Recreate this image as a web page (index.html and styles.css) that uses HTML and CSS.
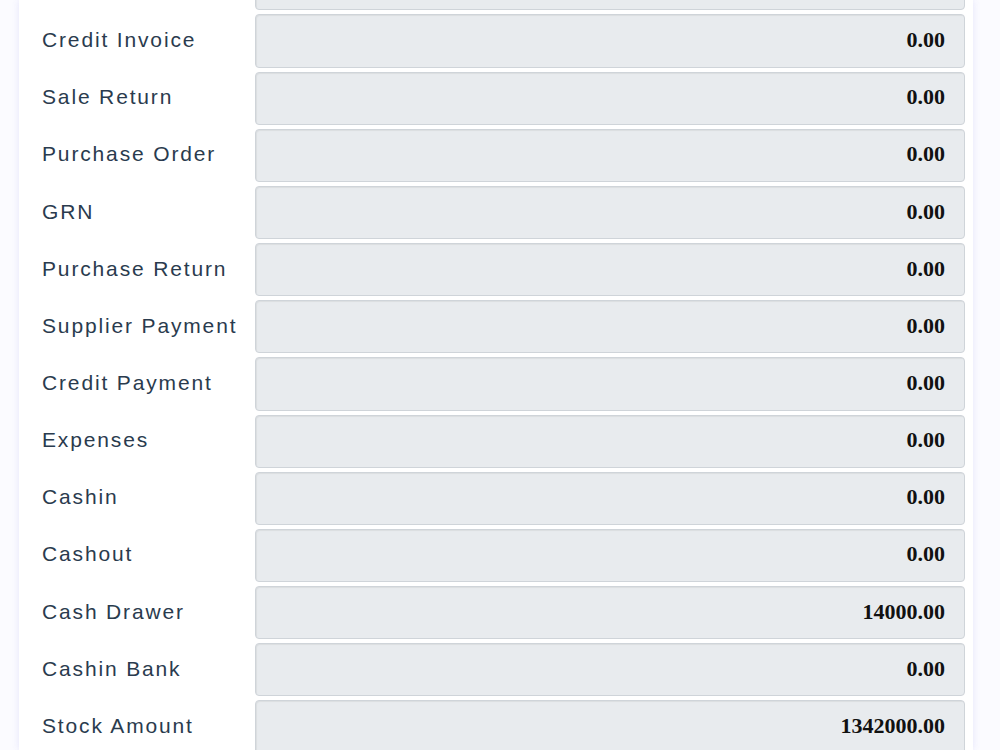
FILE: index.html
```html
<!DOCTYPE html>
<html>
<head>
<meta charset="utf-8">
<link rel="stylesheet" href="styles.css">
</head>
<body>
<div class="card">
  <div class="rows">
    <div class="row"><div class="label"></div><div class="field"></div></div>
    <div class="row"><div class="label">Credit Invoice</div><div class="field">0.00</div></div>
    <div class="row"><div class="label">Sale Return</div><div class="field">0.00</div></div>
    <div class="row"><div class="label">Purchase Order</div><div class="field">0.00</div></div>
    <div class="row"><div class="label">GRN</div><div class="field">0.00</div></div>
    <div class="row"><div class="label">Purchase Return</div><div class="field">0.00</div></div>
    <div class="row"><div class="label">Supplier Payment</div><div class="field">0.00</div></div>
    <div class="row"><div class="label">Credit Payment</div><div class="field">0.00</div></div>
    <div class="row"><div class="label">Expenses</div><div class="field">0.00</div></div>
    <div class="row"><div class="label">Cashin</div><div class="field">0.00</div></div>
    <div class="row"><div class="label">Cashout</div><div class="field">0.00</div></div>
    <div class="row"><div class="label">Cash Drawer</div><div class="field">14000.00</div></div>
    <div class="row"><div class="label">Cashin Bank</div><div class="field">0.00</div></div>
    <div class="row"><div class="label">Stock Amount</div><div class="field">1342000.00</div></div>
  </div>
</div>
</body>
</html>
```

FILE: styles.css
```css
html, body {
  margin: 0;
  padding: 0;
  background: #fbfbff;
  overflow: hidden;
}
.card {
  margin-left: 19px;
  width: 954px;
  height: 750px;
  background: #ffffff;
  box-shadow: 0 0 7px rgba(110, 110, 230, 0.16);
  overflow: hidden;
}
.rows {
  margin-top: -42.7px;
  display: flex;
  flex-direction: column;
  gap: 4px;
}
.row {
  display: grid;
  grid-template-columns: 236px 710px;
  align-items: center;
  height: 53.17px;
}
.label {
  padding-left: 23px;
  padding-bottom: 2px;
  font-family: "Liberation Sans", Arial, sans-serif;
  font-size: 21px;
  letter-spacing: 1.85px;
  color: #2a3b4e;
}
.field {
  box-sizing: border-box;
  height: 53.17px;
  display: flex;
  align-items: center;
  justify-content: flex-end;
  padding-right: 19px;
  padding-bottom: 2px;
  background: #e8ebee;
  border: 1px solid #cfd4d9;
  border-radius: 4px;
  box-shadow: inset 1px 1px 1px rgba(0, 0, 0, 0.06);
  font-family: "Liberation Serif", "Times New Roman", serif;
  font-weight: bold;
  font-size: 22px;
  color: #111;
}
```
